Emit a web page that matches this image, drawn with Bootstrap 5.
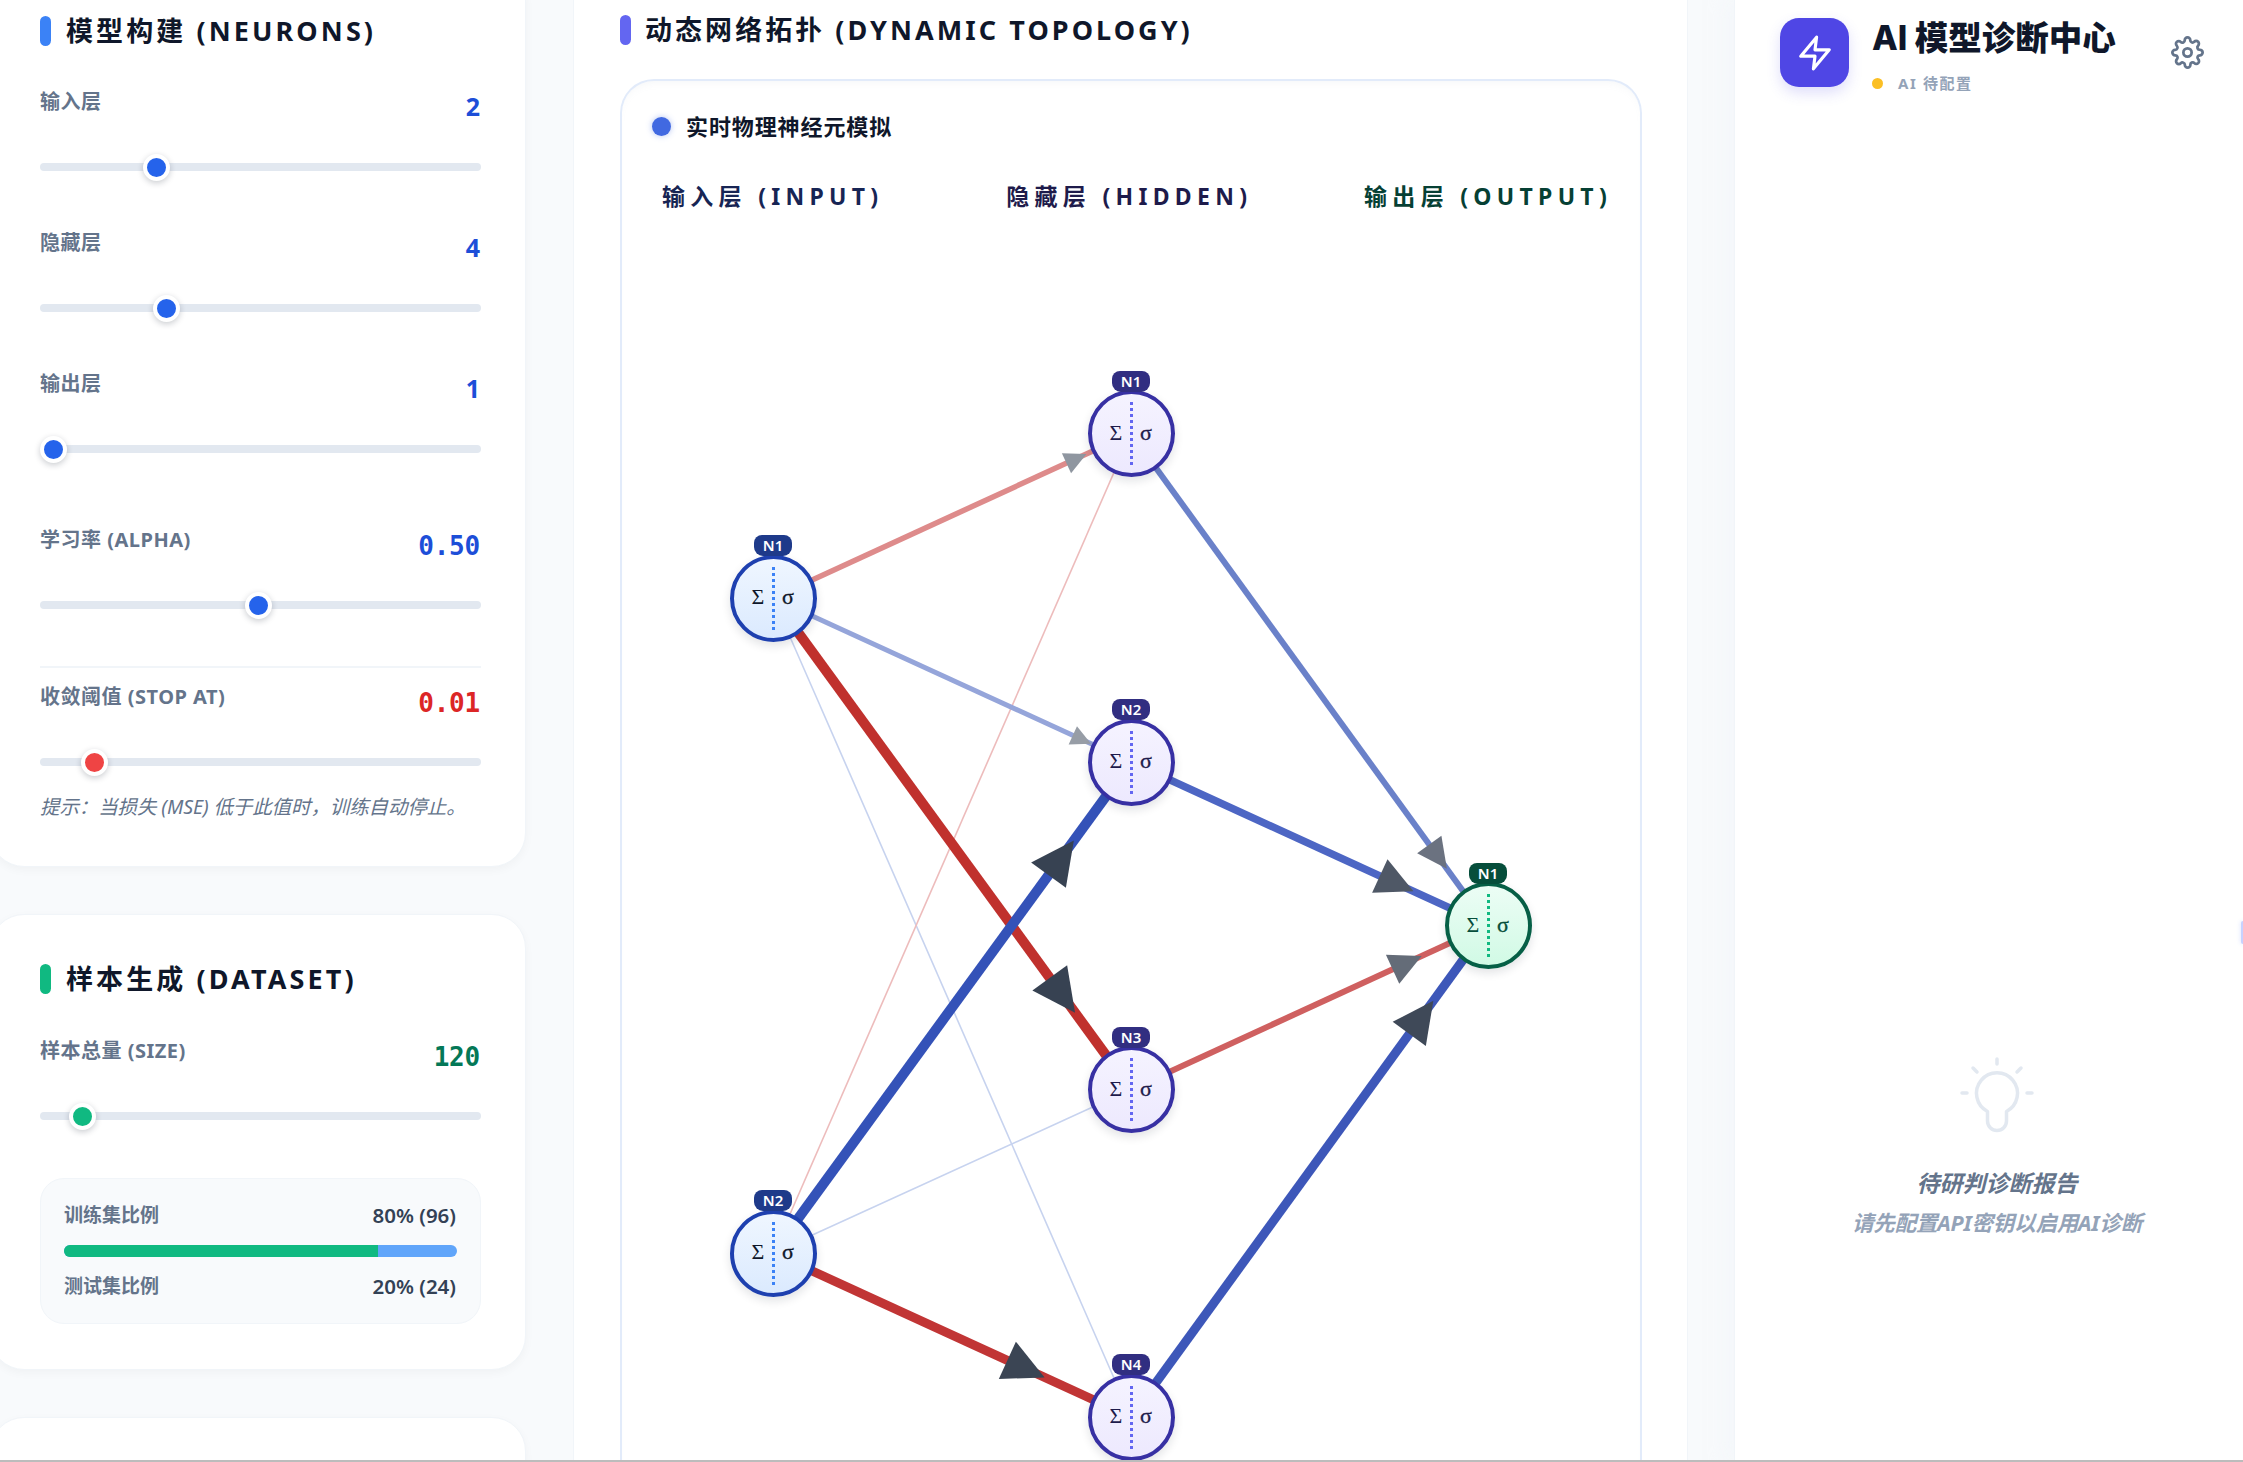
<!doctype html>
<html lang="zh-CN">
<head>
<meta charset="utf-8">
<title>神经网络</title>
<link href="https://cdn.jsdelivr.net/npm/bootstrap@5.3.0/dist/css/bootstrap.min.css" rel="stylesheet">
<style>
html,body{height:1462px;overflow:hidden;background:#f8fafc;}
body{font-family:"Noto Sans","Noto Sans CJK SC",sans-serif;color:#0f172a;}
.stage{height:1460px;overflow:hidden;position:relative;}
.foot-line{height:2px;background:#bcbcbc;}
.side-col{width:536px;margin-left:-10px;margin-top:-35px;gap:47px;flex:none;}
.soft-card{background:#fff;border:1px solid #f1f5f9;border-radius:34px;box-shadow:0 3px 10px rgba(15,23,42,.035);padding:50px 44px 45px 49px;}
.soft-card.second{padding-top:49px;}
.sec-title{height:30px;gap:15px;font-weight:700;font-size:27px;letter-spacing:3.1px;line-height:30px;color:#0f172a;white-space:nowrap;margin-bottom:40px;}
.sec-bar{width:11px;height:30px;border-radius:6px;flex:none;}
.bar-blue{background:#3b82f6;}.bar-green{background:#10b981;}.bar-violet{background:#6366f1;width:11px;}
.ctl{height:141px;}
.ctl-head{height:44px;}
.ctl-alpha .ctl-head,.ctl-stop .ctl-head{padding-top:1.5px;}
.ctl-size .ctl-head{padding-top:1px;}
.ctl-label{font-size:20px;font-weight:700;color:#64748b;line-height:32px;letter-spacing:.5px;}
.ctl-val{font-size:25px;font-weight:700;line-height:40px;color:#1d4ed8;padding-right:1px;}
.ctl-val.mono{font-family:"DejaVu Sans Mono","Liberation Mono",monospace;font-size:26px;letter-spacing:-.2px;line-height:44px;}
.val-red{color:#dc2626;}.val-green{color:#047857;}
.form-range.slim{display:block;height:27px;margin-top:23.5px;padding:0;background:transparent;}
.form-range.slim::-webkit-slider-runnable-track{height:8px;background:#e2e8f0;border-radius:4px;border:0;}
.form-range.slim::-webkit-slider-thumb{-webkit-appearance:none;appearance:none;width:27px;height:27px;margin-top:-9.5px;border-radius:50%;background:#2563eb;border:4.5px solid #fff;box-shadow:0 2px 6px rgba(15,23,42,.22);}
.form-range.slim.red::-webkit-slider-thumb{background:#ef4444;}
.form-range.slim.green::-webkit-slider-thumb{background:#10b981;}
.ctl-alpha{height:auto;margin-top:13px;padding-bottom:47.5px;border-bottom:2px solid #f1f5f9;}
.ctl-alpha .form-range.slim,.ctl-stop .form-range.slim{margin-top:25.5px;}
.ctl-stop{height:auto;padding-top:11px;}
.hint{font-style:italic;font-size:19.5px;line-height:28px;color:#64748b;margin:17.5px 0 0;white-space:nowrap;letter-spacing:-.1px;}
.ctl-size{height:auto;}
.ctl-size .form-range.slim{margin-top:24.5px;}
.ratio-box{margin-top:48px;height:146px;background:#f8fafc;border:1px solid #f1f5f9;border-radius:24px;padding:19px 24px 0 23px;}
.ratio-row{font-size:19px;line-height:34px;font-weight:600;color:#64748b;}
.ratio-row b{font-weight:600;color:#334155;font-size:20.500px;}
.ratio-bar{height:12px;border-radius:6px;overflow:hidden;background:#60a5fa;margin:13px -1px 12px 0;}
.ratio-fill{height:100%;background:#10b981;}
.third-card{height:200px;}
.mid-panel{width:1115px;margin-left:47px;flex:none;background:#fff;border-left:1px solid #f1f5f9;border-right:1px solid #f1f5f9;padding:15px 45px 0 46px;}
.mid-title{letter-spacing:3.05px;gap:14px;margin-bottom:34px;}
.topo-card{position:relative;height:1440px;border:2px solid #e2ebfa;border-bottom:0;border-radius:34px 34px 0 0;background:#fff;box-shadow:inset 0 6px 10px -6px rgba(148,163,184,.12);padding:33px 0 0 30px;}
.live-row{gap:15px;height:24px;font-size:22px;font-weight:700;letter-spacing:.9px;color:#0f172a;line-height:24px;}
.live-dot{width:19px;height:19px;border-radius:50%;background:#4169e1;box-shadow:0 0 6px rgba(65,105,225,.4);flex:none;}
.col-heads{margin:42px 28px 0 10px;font-size:23px;font-weight:700;letter-spacing:5.3px;line-height:32px;white-space:nowrap;}
.h-in{color:#172554;}.h-hid{color:#1e1b4b;margin-left:11px;}.h-out{color:#064034;}
.canvas{position:absolute;left:0;top:0;width:100%;height:100%;}
.topo-card>.live-row,.topo-card>.col-heads{position:relative;z-index:2;}
.nn{position:absolute;width:87px;height:87px;border-radius:50%;border:4.5px solid;box-shadow:0 4px 10px rgba(15,23,42,.12);font-family:"Liberation Serif",serif;font-size:22px;font-weight:400;}
.nn .dash{position:absolute;left:50%;top:8px;bottom:8px;margin-left:-1.5px;border-left:3px dotted;}
.nn .sg{position:absolute;top:50%;line-height:1;transform:translate(-50%,-54%);}
.nn .sg.a{left:calc(50% - 15px);}
.nn .sg.b{left:calc(50% + 15px);-webkit-text-stroke:.35px currentColor;}
.nn .tagn{position:absolute;left:50%;top:-23.5px;transform:translateX(-50%);width:38px;height:21px;border-radius:8px 8px 9px 9px;color:#fff;font:600 15px/20px "Noto Sans",sans-serif;text-align:center;}
.t-in{border-color:#1e40af;background:linear-gradient(#eff6ff,#dbeafe);color:#0f172a;}
.t-in .dash{border-color:#3b82f6;}.t-in .tagn{background:#1e3a8a;}
.t-hid{border-color:#3730a3;background:linear-gradient(#f5f3ff,#ede9fe);color:#1e1b4b;}
.t-hid .dash{border-color:#6366f1;}.t-hid .tagn{background:#312e81;}
.t-out{border-color:#065f46;background:linear-gradient(#ecfdf5,#d1fae5);color:#064e3b;}
.t-out .dash{border-color:#10b981;}.t-out .tagn{background:#064e3b;}
.ai-panel{flex:1;margin-left:46px;background:#fff;border-left:1px solid #f1f5f9;padding:18px 0 0 45px;box-shadow:-8px 0 16px rgba(241,245,249,.5);}
.ai-logo{width:69px;height:69px;border-radius:19px;background:#4f46e5;box-shadow:0 6px 14px rgba(79,70,229,.18);flex:none;}
.ai-head{margin-left:23px;padding-top:1px;}
.ai-h{font-family:Inter,"Noto Sans CJK SC",sans-serif;font-size:33.5px;font-weight:800;line-height:38px;color:#0f172a;white-space:nowrap;margin:0;}
.ai-status{gap:15px;font-size:15px;font-weight:700;letter-spacing:1.6px;color:#94a3b8;line-height:20px;margin-top:16px;}
.st-dot{width:11px;height:11px;border-radius:50%;background:#fbbf24;flex:none;}
.gear{width:33px;height:33px;margin:18px 0 0 55.5px;color:#64748b;flex:none;}
.empty-state{margin-top:963px;margin-left:-29px;width:492px;text-align:center;font-style:italic;font-weight:700;}
.empty-state h6{font-size:23px;line-height:34px;color:#64748b;margin:30px 0 0;font-weight:700;}
.empty-state p{font-size:21.5px;line-height:34px;color:#94a3b8;margin:6px 0 0;white-space:nowrap;letter-spacing:-.2px;}
.bulb{display:block;margin:0 auto;}
.edge-glow{position:absolute;right:0;top:921px;width:2px;height:23px;background:#c7d2fe;border-radius:2px 0 0 2px;box-shadow:0 0 4px rgba(199,210,254,.9);}
</style>
</head>
<body>
<div class="stage d-flex">
  <div class="side-col d-flex flex-column">
    <section class="soft-card">
      <div class="sec-title d-flex align-items-center"><span class="sec-bar bar-blue"></span><span>模型构建 (NEURONS)</span></div>
      <div class="ctl">
        <div class="ctl-head d-flex justify-content-between"><span class="ctl-label">输入层</span><span class="ctl-val">2</span></div>
        <input class="form-range slim" type="range" min="0" max="1000" value="249" aria-label="输入层">
      </div>
      <div class="ctl">
        <div class="ctl-head d-flex justify-content-between"><span class="ctl-label">隐藏层</span><span class="ctl-val">4</span></div>
        <input class="form-range slim" type="range" min="0" max="1000" value="272" aria-label="隐藏层">
      </div>
      <div class="ctl">
        <div class="ctl-head d-flex justify-content-between"><span class="ctl-label">输出层</span><span class="ctl-val">1</span></div>
        <input class="form-range slim" type="range" min="0" max="1000" value="0" aria-label="输出层">
      </div>
      <div class="ctl ctl-alpha">
        <div class="ctl-head d-flex justify-content-between"><span class="ctl-label">学习率 (ALPHA)</span><span class="ctl-val mono">0.50</span></div>
        <input class="form-range slim" type="range" min="0" max="1000" value="494" aria-label="学习率">
      </div>
      <div class="ctl ctl-stop">
        <div class="ctl-head d-flex justify-content-between"><span class="ctl-label">收敛阈值 (STOP AT)</span><span class="ctl-val mono val-red">0.01</span></div>
        <input class="form-range slim red" type="range" min="0" max="1000" value="100" aria-label="收敛阈值">
        <p class="hint">提示：当损失 (MSE) 低于此值时，训练自动停止。</p>
      </div>
    </section>
    <section class="soft-card second">
      <div class="sec-title d-flex align-items-center"><span class="sec-bar bar-green"></span><span>样本生成 (DATASET)</span></div>
      <div class="ctl ctl-size">
        <div class="ctl-head d-flex justify-content-between"><span class="ctl-label">样本总量 (SIZE)</span><span class="ctl-val mono val-green">120</span></div>
        <input class="form-range slim green" type="range" min="0" max="1000" value="71" aria-label="样本总量">
      </div>
      <div class="ratio-box">
        <div class="ratio-row d-flex justify-content-between"><span>训练集比例</span><b>80% (96)</b></div>
        <div class="ratio-bar"><div class="ratio-fill" style="width:80%"></div></div>
        <div class="ratio-row d-flex justify-content-between"><span>测试集比例</span><b>20% (24)</b></div>
      </div>
    </section>
    <section class="soft-card third-card"></section>
  </div>

  <main class="mid-panel">
    <div class="sec-title mid-title d-flex align-items-center"><span class="sec-bar bar-violet"></span><span>动态网络拓扑 (DYNAMIC TOPOLOGY)</span></div>
    <div class="topo-card" id="topo">
      <div class="live-row d-flex align-items-center"><span class="live-dot"></span><span>实时物理神经元模拟</span></div>
      <div class="col-heads d-flex justify-content-between"><span class="h-in">输入层 (INPUT)</span><span class="h-hid">隐藏层 (HIDDEN)</span><span class="h-out">输出层 (OUTPUT)</span></div>
      <div class="canvas" id="canvas"></div>
    </div>
  </main>

  <aside class="ai-panel">
    <div class="d-flex">
      <div class="ai-logo d-flex align-items-center justify-content-center">
        <svg width="38" height="38" viewBox="0 0 24 24" fill="none" stroke="#fff" stroke-width="2" stroke-linecap="round" stroke-linejoin="round"><path d="M13 2 3 14h9l-1 8 10-12h-9l1-8z"/></svg>
      </div>
      <div class="ai-head">
        <h1 class="ai-h">AI 模型诊断中心</h1>
        <div class="ai-status d-flex align-items-center"><span class="st-dot"></span><span>AI 待配置</span></div>
      </div>
      <svg class="gear" viewBox="0 0 24 24" fill="none" stroke="currentColor" stroke-width="2" stroke-linecap="round" stroke-linejoin="round"><circle cx="12" cy="12" r="3"/><path d="M19.4 15a1.65 1.65 0 0 0 .33 1.82l.06.06a2 2 0 1 1-2.83 2.83l-.06-.06a1.65 1.65 0 0 0-1.82-.33 1.65 1.65 0 0 0-1 1.51V21a2 2 0 0 1-4 0v-.09A1.65 1.65 0 0 0 9 19.4a1.65 1.65 0 0 0-1.82.33l-.06.06a2 2 0 1 1-2.83-2.83l.06-.06a1.65 1.65 0 0 0 .33-1.82 1.65 1.65 0 0 0-1.51-1H3a2 2 0 0 1 0-4h.09A1.65 1.65 0 0 0 4.6 9a1.65 1.65 0 0 0-.33-1.82l-.06-.06a2 2 0 1 1 2.83-2.83l.06.06a1.65 1.65 0 0 0 1.82.33H9a1.65 1.65 0 0 0 1-1.51V3a2 2 0 0 1 4 0v.09a1.65 1.65 0 0 0 1 1.51 1.65 1.65 0 0 0 1.82-.33l.06-.06a2 2 0 1 1 2.83 2.83l-.06.06a1.65 1.65 0 0 0-.33 1.82V9a1.65 1.65 0 0 0 1.51 1H21a2 2 0 0 1 0 4h-.09a1.65 1.65 0 0 0-1.51 1z"/></svg>
    </div>
    <div class="empty-state" id="empty">
      <svg class="bulb" width="80" height="80" viewBox="0 0 80 80" fill="none" stroke="#e2e8f0" stroke-width="3.5" stroke-linecap="round" stroke-linejoin="round"><path d="M40 3v5M70 37h5M5 37h5M60 16l4-4M20 16l-4-4"/><path d="M30.500 55.500a20.500 20.500 0 1 1 19 0V65a9.500 9.500 0 0 1-19 0z"/></svg>
      <h6>待研判诊断报告</h6>
      <p>请先配置API密钥以启用AI诊断</p>
    </div>
  </aside>
  <div class="edge-glow"></div>
</div>
<div class="foot-line"></div>
<script src="https://cdn.jsdelivr.net/npm/bootstrap@5.3.0/dist/js/bootstrap.bundle.min.js"></script>
<script>
(function(){
  var N={i1:[773,598,'t-in','N1'],i2:[773,1253,'t-in','N2'],
         h1:[1131,433.5,'t-hid','N1'],h2:[1131,762,'t-hid','N2'],h3:[1131,1089.5,'t-hid','N3'],h4:[1131,1417,'t-hid','N4'],
         o1:[1488,925.5,'t-out','N1']};
  // from,to,colour,width,arrow tip distance,arrow size,arrow colour
  var E=[
    ['i1','h4','#c7d3ef',1.6],
    ['i2','h1','#edbcbc',1.6],
    ['i2','h3','#c7d3ef',1.6],
    ['i1','h1','#de8b8b',5.5,49,22,'#8f96a0'],
    ['i1','h2','#95a5da',5,44,20,'#979da6'],
    ['i1','h3','#c0312d',10,95,43,'#374252'],
    ['i2','h2','#3452b8',10,97,43,'#374252'],
    ['i2','h4','#c13535',9,95,41,'#3b4554'],
    ['h1','o1','#6a81c9',6,70,30,'#6b7280'],
    ['h2','o1','#4d66c4',7.5,82,37,'#4f5866'],
    ['h3','o1','#cf6060',6,73,32,'#646c78'],
    ['h4','o1','#3d57b9',9,93,41,'#3f4958']
  ];
  var c=document.getElementById('canvas'),r=c.getBoundingClientRect();
  var s='<svg width="'+r.width+'" height="'+r.height+'" style="position:absolute;left:0;top:0;overflow:hidden">',a='';
  E.forEach(function(e){
    var A=N[e[0]],B=N[e[1]],x1=A[0]-r.left,y1=A[1]-r.top,x2=B[0]-r.left,y2=B[1]-r.top;
    var d=Math.hypot(x2-x1,y2-y1),ux=(x2-x1)/d,uy=(y2-y1)/d;
    s+='<line x1="'+x1+'" y1="'+y1+'" x2="'+x2+'" y2="'+y2+'" stroke="'+e[2]+'" stroke-width="'+e[3]+'"/>';
    if(e[4]){
      var tx=x2-ux*e[4],ty=y2-uy*e[4],bx=tx-ux*e[5],by=ty-uy*e[5],h=e[5]/2;
      a+='<polygon points="'+tx+','+ty+' '+(bx-uy*h)+','+(by+ux*h)+' '+(bx+uy*h)+','+(by-ux*h)+'" fill="'+e[6]+'"/>';
    }
  });
  s+=a+'</svg>';
  Object.keys(N).forEach(function(k){
    var n=N[k];
    s+='<div class="nn '+n[2]+'" style="left:'+(n[0]-43.5-r.left)+'px;top:'+(n[1]-43.5-r.top)+'px"><span class="tagn">'+n[3]+'</span><span class="dash"></span><span class="sg a">Σ</span><span class="sg b">σ</span></div>';
  });
  c.innerHTML=s;
})();
</script>
</body>
</html>
